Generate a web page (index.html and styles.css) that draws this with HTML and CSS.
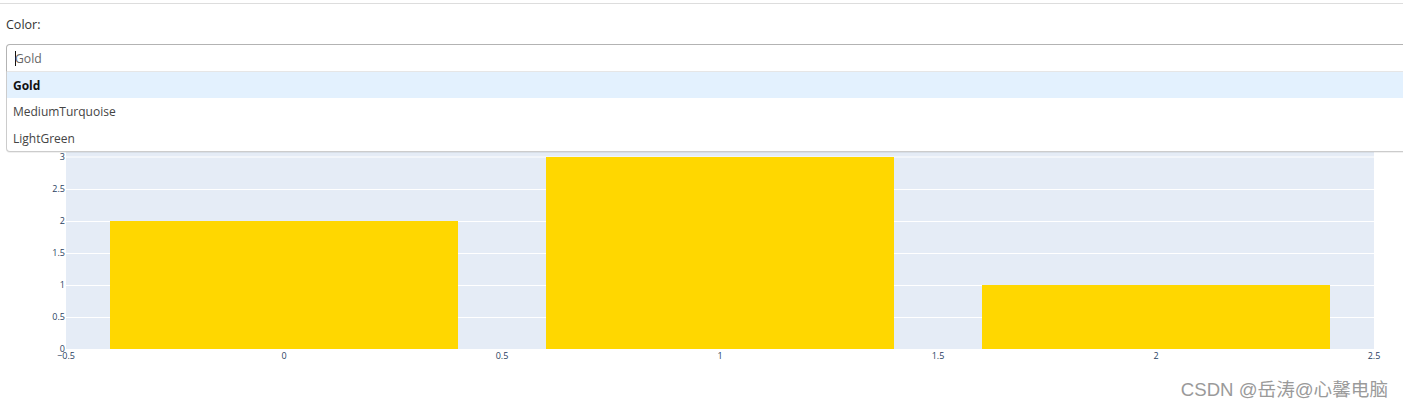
FILE: index.html
```html
<!DOCTYPE html>
<html lang="en">
<head>
    <meta charset="UTF-8">
    <meta name="viewport" content="width=device-width, initial-scale=1.0">
    <title>Color dropdown</title>
    <link rel="stylesheet" href="styles.css">
</head>
<body>
    <hr class="top-rule">
    <label class="field-label">Color:</label>

    <div class="dropdown">
        <div class="dropdown-input"><span class="caret"></span>Gold</div>
        <div class="dropdown-menu">
            <div class="option selected">Gold</div>
            <div class="option">MediumTurquoise</div>
            <div class="option">LightGreen</div>
        </div>
    </div>

    <svg class="chart" viewBox="0 100 1403 270" width="1403" height="270">
        <rect class="plot-bg" x="66" y="100" width="1308" height="249"></rect>

        <!-- grid -->
        <g class="grid">
            <line x1="66" x2="1374" y1="157" y2="157"></line>
            <line x1="66" x2="1374" y1="189.5" y2="189.5"></line>
            <line x1="66" x2="1374" y1="221.5" y2="221.5"></line>
            <line x1="66" x2="1374" y1="253.5" y2="253.5"></line>
            <line x1="66" x2="1374" y1="285.5" y2="285.5"></line>
            <line x1="66" x2="1374" y1="317.5" y2="317.5"></line>
        </g>

        <!-- bars -->
        <g class="bars">
            <rect x="110" y="221" width="348" height="128"></rect>
            <rect x="546" y="157" width="348" height="192"></rect>
            <rect x="982" y="285" width="348" height="64"></rect>
        </g>

        <g class="y-ticks">
            <text x="65" y="160">3</text>
            <text x="65" y="192">2.5</text>
            <text x="65" y="224">2</text>
            <text x="65" y="256">1.5</text>
            <text x="65" y="288">1</text>
            <text x="65" y="320">0.5</text>
            <text x="65" y="352">0</text>
        </g>
        <g class="x-ticks">
            <text x="66" y="359">−0.5</text>
            <text x="284" y="359">0</text>
            <text x="502" y="359">0.5</text>
            <text x="720" y="359">1</text>
            <text x="938" y="359">1.5</text>
            <text x="1156" y="359">2</text>
            <text x="1374" y="359">2.5</text>
        </g>
    </svg>

    <div class="watermark">CSDN @岳涛@心馨电脑</div>
</body>
</html>
```

FILE: styles.css
```css
* {
    margin: 0;
    padding: 0;
    box-sizing: border-box;
}

html, body {
    width: 1403px;
    height: 409px;
    overflow: hidden;
}

body {
    position: relative;
    background: #fff;
    font-family: "Open Sans", verdana, arial, sans-serif;
    color: #333;
    padding-top: 3px;
}

.top-rule {
    border: none;
    border-top: 1px solid #ddd;
}

.field-label {
    display: block;
    margin: 13px 0 11px 6px;
    font-size: 12.5px;
    line-height: 16px;
    color: #333;
}

.dropdown {
    position: relative;
    width: 1500px;
    margin-left: 6px;
}

.dropdown-input {
    display: flex;
    align-items: center;
    height: 28px;
    padding-left: 8px;
    font-size: 12.2px;
    color: #666;
    background: #fff;
    border: 1px solid #b3b3b3;
    border-bottom-color: #e6e6e6;
    border-radius: 4px 4px 0 0;
}

.caret {
    width: 1px;
    height: 15px;
    margin-right: -1px;
    background: #111;
}

.dropdown-menu {
    position: absolute;
    top: 28px;
    left: 0;
    right: 0;
    z-index: 2;
    background: #fff;
    border: 1px solid #ccc;
    border-top: none;
    border-radius: 0 0 4px 4px;
    box-shadow: 0 1px 0 rgba(0, 0, 0, 0.06);
}

.option {
    height: 26.3px;
    padding-left: 6px;
    font-size: 12px;
    line-height: 28px;
    color: #444;
}

.option.selected {
    background: #e3f1fe;
    font-weight: 700;
    color: #111;
}

.chart {
    display: block;
    margin-top: 28px;
}

.plot-bg {
    fill: #e5ecf6;
}

.grid line {
    stroke: #fff;
    stroke-width: 1;
}

.bars rect {
    fill: #ffd700;
}

.y-ticks text,
.x-ticks text {
    font-size: 9px;
    fill: #2a3f5f;
}

.y-ticks text {
    text-anchor: end;
}

.x-ticks text {
    text-anchor: middle;
}

.watermark {
    position: absolute;
    top: 378px;
    right: 15px;
    font-family: "Liberation Sans", "Noto Sans CJK SC", sans-serif;
    font-size: 18.6px;
    line-height: 24px;
    color: #9a9a9a;
}
```
